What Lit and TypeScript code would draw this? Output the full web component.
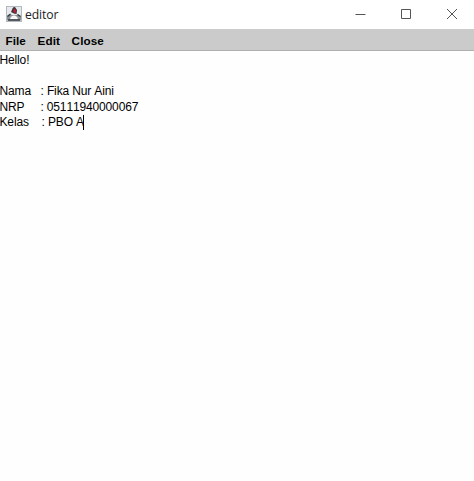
import { LitElement, html, css } from "lit";
import { customElement } from "lit/decorators.js";

@customElement("title-bar")
class TitleBar extends LitElement {
  static styles = css`
    :host { display: flex; height: 29px; align-items: flex-start; background: #fff; padding-left: 6px; box-sizing: border-box; }
    .logo { width: 16px; height: 16px; flex: none; margin-top: 6px; }
    .title { font: 12.2px/16px "Open Sans", "Noto Sans", sans-serif; color: #222; margin: 7px 0 0 3px; flex: 1; letter-spacing: -0.1px; }
    .controls { display: flex; }
    .controls svg { width: 46px; height: 28px; display: block; }
    .controls svg path { fill: none; stroke: #555; stroke-width: 1; }
  `;
  render() {
    return html`
      <svg class="logo" viewBox="0 0 16 16">
        <rect x=".5" y=".5" width="15" height="15" fill="#e6eaed" stroke="#b4b9bd" />
        <path d="M1 10C3 8 4 8 6 9h4c2-1 3-.5 5 1v4.500H1z" fill="#8b9297" />
        <path d="M4 13.500C4.500 10.500 6 9.500 8 9.500s3.500 1 4 4z" fill="#f6f7f7" />
        <path d="M1.500 10.500L4.500 8M11.500 8.500l3 2M2 14h12" stroke="#333a40" stroke-width="1.300" fill="none" />
        <path d="M5 6L7 1.500 9 1l2 3-.5 4-2.500-.5z" fill="#353239" />
        <path d="M7 5L8.500 2l1.700 3-1.500 2.800z" fill="#b81f3b" />
      </svg>
      <span class="title">editor</span>
      <div class="controls">
        <svg viewBox="0 0 46 28"><path d="M19.500 14.500h10" /></svg>
        <svg viewBox="0 0 46 28"><path d="M19.500 9.500h9v9h-9z" /></svg>
        <svg viewBox="0 0 46 28"><path d="M19 9l10 10M29 9L19 19" /></svg>
      </div>
    `;
  }
}

@customElement("menu-bar")
class MenuBar extends LitElement {
  static styles = css`
    :host {
      display: flex; gap: 11.6px; height: 22px; padding: 1px 0 0 5.4px; box-sizing: border-box;
      background: #cbcbcb; border-bottom: 1px solid #b0b0b0;
      font: bold 11.7px/21px "Liberation Sans", Arial, sans-serif; letter-spacing: 0.1px; color: #000;
    }
  `;
  render() {
    return html`${["File", "Edit", "Close"].map((m) => html`<span>${m}</span>`)}`;
  }
}

@customElement("app-root")
class AppRoot extends LitElement {
  static styles = css`
    :host { display: block; height: 481px; background: #fefefe; overflow: hidden; }
    .text {
      font: 12px/15.6px "Liberation Sans", Arial, sans-serif; font-kerning: none; letter-spacing: -0.14px;
      color: #000; padding-top: 2px; margin-left: -0.5px;
    }
    .line { display: flex; height: 15.6px; white-space: pre; }
    .caret { width: 1px; height: 15px; margin-left: -0.5px; background: #000; }
  `;
  render() {
    return html`
      <title-bar></title-bar>
      <menu-bar></menu-bar>
      <div class="text">
        <div class="line">Hello!</div>
        <div class="line"></div>
        <div class="line">Nama   : Fika Nur Aini</div>
        <div class="line">NRP     : 05111940000067</div>
        <div class="line">Kelas    : PBO A<span class="caret"></span></div>
      </div>
    `;
  }
}
